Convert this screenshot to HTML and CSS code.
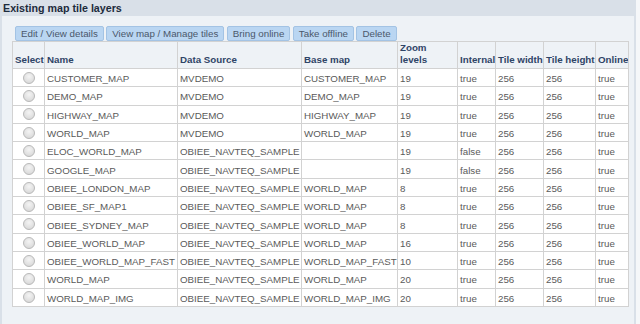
FILE: index.html
```html
<!DOCTYPE html>
<html lang="en">
<head>
  <meta charset="UTF-8" />
  <title>Existing map tile layers</title>
  <link rel="stylesheet" href="styles.css">
</head>
<body>
  <div class="region">
    <div class="region-title">Existing map tile layers</div>
    <div class="region-body">
      <div class="toolbar">
        <button>Edit / View details</button>
        <button>View map / Manage tiles</button>
        <button>Bring online</button>
        <button>Take offline</button>
        <button>Delete</button>
      </div>
      <table class="layers">
        <colgroup>
          <col style="width:32px"><col style="width:133px"><col style="width:124px">
          <col style="width:96px"><col style="width:60px"><col style="width:38px">
          <col style="width:48px"><col style="width:52px"><col style="width:33px">
        </colgroup>
        <thead>
          <tr>
            <th>Select</th><th>Name</th><th>Data Source</th><th>Base map</th>
            <th>Zoom<br>levels</th><th>Internal</th><th>Tile width</th><th>Tile height</th><th>Online</th>
          </tr>
        </thead>
        <tbody id="rows"></tbody>
      </table>
    </div>
  </div>

  <script>
    const layers = [
      ["CUSTOMER_MAP", "MVDEMO", "CUSTOMER_MAP", 19, "true"],
      ["DEMO_MAP", "MVDEMO", "DEMO_MAP", 19, "true"],
      ["HIGHWAY_MAP", "MVDEMO", "HIGHWAY_MAP", 19, "true"],
      ["WORLD_MAP", "MVDEMO", "WORLD_MAP", 19, "true"],
      ["ELOC_WORLD_MAP", "OBIEE_NAVTEQ_SAMPLE", "", 19, "false"],
      ["GOOGLE_MAP", "OBIEE_NAVTEQ_SAMPLE", "", 19, "false"],
      ["OBIEE_LONDON_MAP", "OBIEE_NAVTEQ_SAMPLE", "WORLD_MAP", 8, "true"],
      ["OBIEE_SF_MAP1", "OBIEE_NAVTEQ_SAMPLE", "WORLD_MAP", 8, "true"],
      ["OBIEE_SYDNEY_MAP", "OBIEE_NAVTEQ_SAMPLE", "WORLD_MAP", 8, "true"],
      ["OBIEE_WORLD_MAP", "OBIEE_NAVTEQ_SAMPLE", "WORLD_MAP", 16, "true"],
      ["OBIEE_WORLD_MAP_FAST", "OBIEE_NAVTEQ_SAMPLE", "WORLD_MAP_FAST", 10, "true"],
      ["WORLD_MAP", "OBIEE_NAVTEQ_SAMPLE", "WORLD_MAP", 20, "true"],
      ["WORLD_MAP_IMG", "OBIEE_NAVTEQ_SAMPLE", "WORLD_MAP_IMG", 20, "true"]
    ];

    const tbody = document.getElementById("rows");
    layers.forEach(function (l) {
      const tr = document.createElement("tr");
      tr.innerHTML =
        '<td class="sel"><span class="radio"></span></td>' +
        '<td>' + l[0] + '</td><td>' + l[1] + '</td><td>' + l[2] + '</td>' +
        '<td>' + l[3] + '</td><td>' + l[4] + '</td>' +
        '<td>256</td><td>256</td><td>true</td>';
      tbody.appendChild(tr);
    });
  </script>
</body>
</html>
```

FILE: styles.css
```css
body {
  margin: 0;
  background: #f5f7f9;
  font-family: "Liberation Sans", Arial, sans-serif;
}
.region {
  width: 632px;
  height: 324px;
  padding: 0 2px;
  background: #d9e0e8;
  display: flex;
  flex-direction: column;
}
.region-title {
  height: 16px;
  line-height: 16px;
  padding-left: 1px;
  font-size: 10.7px;
  font-weight: bold;
  color: #1d2b3c;
}
.region-body {
  flex: 1;
  background: #eef2f6;
  padding: 10px 6px 0 10px;
}
.toolbar {
  display: flex;
  gap: 2.5px;
  padding-left: 3px;
}
.toolbar button {
  height: 15px;
  padding: 0 5px;
  font-family: inherit;
  font-size: 9.75px;
  color: #4a586b;
  background: #bad6f2;
  border: 1px solid #a3c3e4;
  border-radius: 2px;
  line-height: 13px;
}
.layers {
  border-collapse: collapse;
  table-layout: fixed;
  width: 616px;
  font-size: 9.75px;
  line-height: 11px;
}
.layers th,
.layers td {
  border: 1px solid #d2d2d2;
  padding: 0 2px;
  text-align: left;
  white-space: nowrap;
  overflow: hidden;
}
.layers thead tr {
  height: 26px;
}
.layers th {
  vertical-align: bottom;
  padding-bottom: 2px;
  line-height: 12px;
  color: #2e4466;
  font-weight: bold;
  background: #eef2f6;
}
.layers tbody tr {
  height: 18.3px;
}
.layers td {
  background: #fff;
  color: #5a5a5a;
  padding-top: 2px;
}
.layers td.sel {
  text-align: center;
  padding: 0;
}
.radio {
  display: inline-block;
  width: 10px;
  height: 10px;
  border-radius: 50%;
  border: 1px solid #b9b9b9;
  background: radial-gradient(circle at 50% 35%, #f4f4f4, #d3d3d3);
  vertical-align: middle;
}
```
